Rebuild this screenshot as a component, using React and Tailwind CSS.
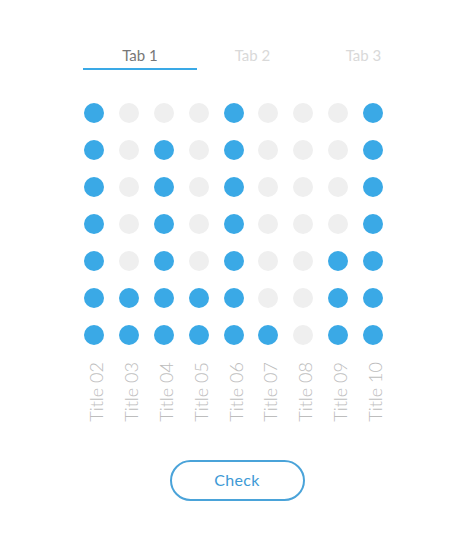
import { useState } from 'react';

const ROWS = [
  [1, 0, 0, 0, 1, 0, 0, 0, 1],
  [1, 0, 1, 0, 1, 0, 0, 0, 1],
  [1, 0, 1, 0, 1, 0, 0, 0, 1],
  [1, 0, 1, 0, 1, 0, 0, 0, 1],
  [1, 0, 1, 0, 1, 0, 0, 1, 1],
  [1, 1, 1, 1, 1, 0, 0, 1, 1],
  [1, 1, 1, 1, 1, 1, 0, 1, 1],
];

const TITLES = ['Title 02', 'Title 03', 'Title 04', 'Title 05', 'Title 06', 'Title 07', 'Title 08', 'Title 09', 'Title 10'];

const TABS = ['Tab 1', 'Tab 2', 'Tab 3'];

export default function App() {
  const [tab, setTab] = useState(0);

  return (
    <div className="w-[474px] h-[543px] bg-white font-['Lato',sans-serif]">
      <div className="flex ml-[83px] pt-[45px]">
        {TABS.map((t, i) => (
          <button
            key={t}
            onClick={() => setTab(i)}
            className={`${i === 0 ? 'w-[114px]' : 'w-[111px]'} pb-[3px] text-[15px] leading-[20px] border-b-2 ${
              tab === i ? 'border-[#3aa9e6] text-[#777]' : 'border-transparent text-[#d9d9d9]'
            }`}
          >
            {t}
          </button>
        ))}
      </div>

      <div className="ml-[77px] mt-[24px] grid grid-cols-[repeat(9,34.8px)] auto-rows-[37px]">
        {ROWS.flatMap((row, r) =>
          row.map((on, c) => (
            <div key={`${r}-${c}`} className="flex items-center justify-center">
              <span className={`w-[20px] h-[20px] rounded-full ${on ? 'bg-[#3aa9e6]' : 'bg-[#efefef]'}`} />
            </div>
          ))
        )}
      </div>

      <div className="ml-[79px] mt-[9px] grid grid-cols-[repeat(9,34.8px)]">
        {TITLES.map((t) => (
          <div key={t} className="flex justify-center">
            <span className="[writing-mode:vertical-rl] rotate-180 text-[18px] leading-[22px] font-light text-[#bdbdbd] whitespace-nowrap">
              {t}
            </span>
          </div>
        ))}
      </div>

      <div className="flex justify-center mt-[38px]">
        <button className="w-[135px] h-[41px] rounded-full border-2 border-[#4aa3d9] text-[#3d9ad6] text-[16px] tracking-[0.3px]">
          Check
        </button>
      </div>
    </div>
  );
}
